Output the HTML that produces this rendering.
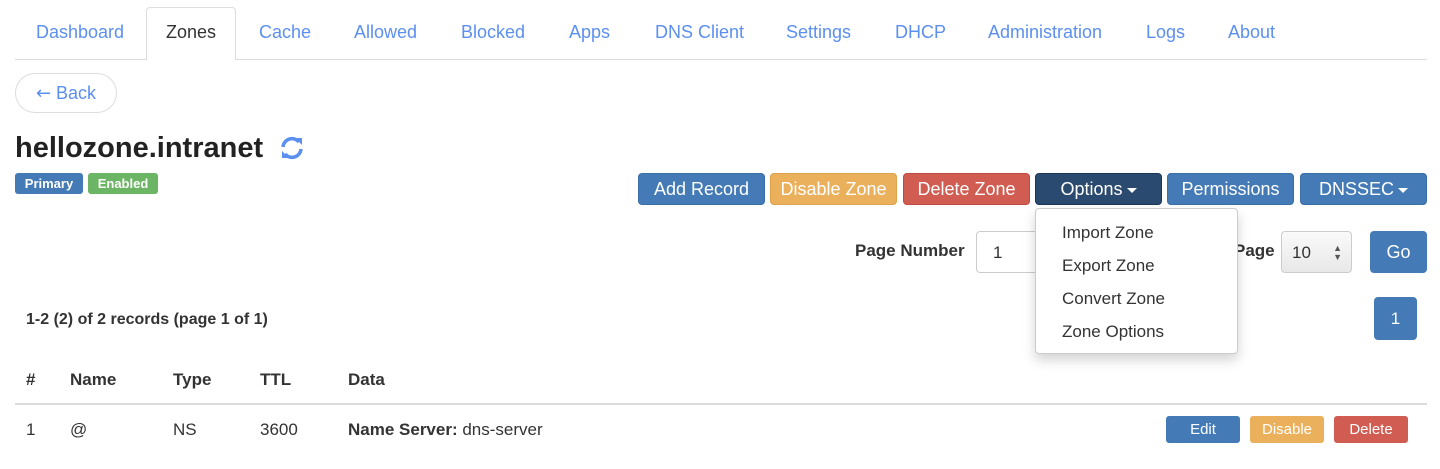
<!DOCTYPE html>
<html><head><style>
*{box-sizing:border-box;margin:0;padding:0}
body{width:1440px;height:469px;background:#fff;font-family:"Liberation Sans",sans-serif;color:#333;position:relative;overflow:hidden}
.a{position:absolute}
.tab{position:absolute;top:22px;font-size:18px;color:#5b8ff0}
.btn{position:absolute;top:173px;height:32px;border-radius:4px;color:#fff;font-size:18px;text-align:center;line-height:30px;border:1px solid}
.bl{background:#447ab6;border-color:#3a6ea6}
.or{background:#ebb05b;border-color:#dfa14a}
.rd{background:#d05c52;border-color:#c04a42}
.car{display:inline-block;width:0;height:0;border-left:5px solid transparent;border-right:5px solid transparent;border-top:5px solid #fff;vertical-align:middle;margin-left:4px}
.th{position:absolute;top:370px;font-size:17px;font-weight:bold}
.td{position:absolute;top:420px;font-size:17px}
.sb{position:absolute;top:415px;height:29px;width:76px;border-radius:4px;color:#fff;font-size:15px;text-align:center;line-height:27px;border:1px solid}
</style></head><body>
<div class="a" style="left:15px;top:59px;width:1412px;height:1px;background:#ddd"></div>
<div class="a" style="left:146px;top:7px;width:90px;height:53px;border:1px solid #ddd;border-bottom:none;border-radius:4px 4px 0 0;background:#fff"></div>
<div class="tab" style="left:36px">Dashboard</div>
<div class="tab" style="left:166px;color:#333">Zones</div>
<div class="tab" style="left:259px">Cache</div>
<div class="tab" style="left:354px">Allowed</div>
<div class="tab" style="left:461px">Blocked</div>
<div class="tab" style="left:569px">Apps</div>
<div class="tab" style="left:655px">DNS Client</div>
<div class="tab" style="left:786px">Settings</div>
<div class="tab" style="left:895px">DHCP</div>
<div class="tab" style="left:988px">Administration</div>
<div class="tab" style="left:1146px">Logs</div>
<div class="tab" style="left:1228px">About</div>

<div class="a" style="left:15px;top:73px;width:102px;height:40px;border:1px solid #ddd;border-radius:20px;color:#5b8ff0;font-size:18px;line-height:38px;text-align:center"><span style="font-family:'DejaVu Sans'">←</span> Back</div>

<div class="a" style="left:15px;top:132px;font-size:29px;font-weight:bold;color:#222">hellozone.intranet</div>
<svg class="a" style="left:279px;top:135px" width="26" height="26" viewBox="0 0 26 26"><g fill="none" stroke="#5b8ff0" stroke-width="3.5"><path d="M4 12A9 9 0 0 1 20 7"/><path d="M22 14A9 9 0 0 1 6 19"/></g><path d="M16 3l7 0 0 7z" fill="#5b8ff0"/><path d="M10 23l-7 0 0-7z" fill="#5b8ff0"/></svg>
<div class="a" style="left:15px;top:173px;width:68px;height:21px;background:#447ab6;border-radius:3px;color:#fff;font-size:13px;font-weight:bold;text-align:center;line-height:21px">Primary</div>
<div class="a" style="left:88px;top:173px;width:70px;height:21px;background:#6cb565;border-radius:3px;color:#fff;font-size:13px;font-weight:bold;text-align:center;line-height:21px">Enabled</div>

<div class="btn bl" style="left:638px;width:127px">Add Record</div>
<div class="btn or" style="left:770px;width:127px">Disable Zone</div>
<div class="btn rd" style="left:903px;width:127px">Delete Zone</div>
<div class="btn" style="left:1035px;width:127px;background:#2b4a70;border-color:#1e3656">Options<span class="car"></span></div>
<div class="btn bl" style="left:1167px;width:127px">Permissions</div>
<div class="btn bl" style="left:1300px;width:127px">DNSSEC<span class="car"></span></div>

<div class="a" style="left:855px;top:241px;font-size:17px;font-weight:bold">Page Number</div>
<div class="a" style="left:976px;top:231px;width:70px;height:42px;border:1px solid #ccc;border-radius:4px;font-size:17px;padding:11px 0 0 16px">1</div>
<div class="a" style="left:1234px;top:241px;font-size:17px;font-weight:bold">Page</div>
<div class="a" style="left:1281px;top:231px;width:71px;height:42px;border:1px solid #ccc;border-radius:4px;background:linear-gradient(#fafafa,#e8e8e8);font-size:17px;padding:11px 0 0 10px">10<span style="position:absolute;right:9px;top:12px;font-size:9px;line-height:9px;color:#555">▲<br>▼</span></div>
<div class="a" style="left:1370px;top:231px;width:57px;height:42px;background:#447ab6;border-radius:4px;color:#fff;font-size:18px;text-align:center;line-height:42px">Go</div>

<div class="a" style="left:1035px;top:208px;width:203px;height:146px;background:#fff;border:1px solid #ccc;border-radius:4px;box-shadow:0 6px 12px rgba(0,0,0,.175)"></div>
<div class="a" style="left:1062px;top:216px;font-size:17px;line-height:33px">Import Zone<br>Export Zone<br>Convert Zone<br>Zone Options</div>

<div class="a" style="left:26px;top:311px;font-size:16px;font-weight:bold">1-2 (2) of 2 records (page 1 of 1)</div>
<div class="a" style="left:1374px;top:297px;width:43px;height:43px;background:#447ab6;border-radius:4px;color:#fff;font-size:17px;text-align:center;line-height:43px">1</div>

<div class="th" style="left:26px">#</div>
<div class="th" style="left:70px">Name</div>
<div class="th" style="left:173px">Type</div>
<div class="th" style="left:260px">TTL</div>
<div class="th" style="left:348px">Data</div>
<div class="a" style="left:15px;top:403px;width:1412px;height:2px;background:#ddd"></div>
<div class="td" style="left:26px">1</div>
<div class="td" style="left:70px">@</div>
<div class="td" style="left:173px">NS</div>
<div class="td" style="left:260px">3600</div>
<div class="td" style="left:348px"><b>Name Server:</b> dns-server</div>
<div class="sb bl" style="left:1165px">Edit</div>
<div class="sb or" style="left:1249px">Disable</div>
<div class="sb rd" style="left:1333px">Delete</div>
</body></html>
